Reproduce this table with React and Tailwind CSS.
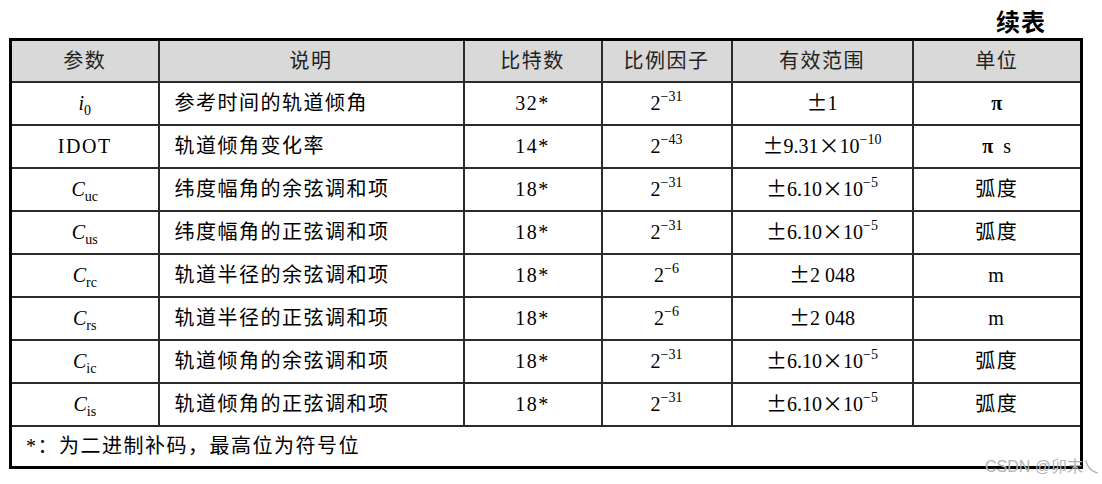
import React from "react";

const F = { fontFamily: '"Liberation Serif", "Noto Sans CJK SC", serif' };
const CJK = { fontFamily: '"Noto Sans CJK SC", sans-serif' };

const Sup = ({ children }) => (
  <sup className="text-[14px] relative -top-[9px]">{children}</sup>
);
const Sub = ({ children }) => (
  <sub className="text-[14px] not-italic relative top-[5px]">{children}</sub>
);
const C = ({ s }) => (
  <span>
    <i>C</i>
    <Sub>{s}</Sub>
  </span>
);
const W = ({ children }) => (
  <span className="inline-block w-[21px] text-center text-[21px] leading-none" style={CJK}>
    {children}
  </span>
);
const T = ({ children }) => <span className="tracking-[1.5px]">{children}</span>;

const rows = [
  [<span><i>i</i><Sub>0</Sub></span>, "参考时间的轨道倾角", "32*", <span>2<Sup>−31</Sup></span>, <span><W>±</W>1</span>, <b>π</b>],
  ["IDOT", "轨道倾角变化率", "14*", <span>2<Sup>−43</Sup></span>, <span><W>±</W>9.31<W>×</W>10<Sup>−10</Sup></span>, <span><b>π</b>&nbsp; s</span>],
  [<C s="uc" />, "纬度幅角的余弦调和项", "18*", <span>2<Sup>−31</Sup></span>, <span><W>±</W>6.10<W>×</W>10<Sup>−5</Sup></span>, "弧度"],
  [<C s="us" />, "纬度幅角的正弦调和项", "18*", <span>2<Sup>−31</Sup></span>, <span><W>±</W>6.10<W>×</W>10<Sup>−5</Sup></span>, "弧度"],
  [<C s="rc" />, "轨道半径的余弦调和项", "18*", <span>2<Sup>−6</Sup></span>, <span><W>±</W>2 048</span>, "m"],
  [<C s="rs" />, "轨道半径的正弦调和项", "18*", <span>2<Sup>−6</Sup></span>, <span><W>±</W>2 048</span>, "m"],
  [<C s="ic" />, "轨道倾角的余弦调和项", "18*", <span>2<Sup>−31</Sup></span>, <span><W>±</W>6.10<W>×</W>10<Sup>−5</Sup></span>, "弧度"],
  [<C s="is" />, "轨道倾角的正弦调和项", "18*", <span>2<Sup>−31</Sup></span>, <span><W>±</W>6.10<W>×</W>10<Sup>−5</Sup></span>, "弧度"],
];

const headers = ["参数", "说明", "比特数", "比例因子", "有效范围", "单位"];

export default function App() {
  return (
    <div className="w-[1102px] h-[484px] bg-white text-black relative" style={F}>
      <div className="h-[38px] flex items-center justify-end pr-[56px] pt-[4px]">
        <span className="text-[24px] font-bold tracking-[1px]" style={CJK}>续表</span>
      </div>
      <div className="pl-[9px]">
        <table className="table-fixed border-collapse border-[3px] border-black w-[1071px] text-[20px]">
          <colgroup>
            <col className="w-[148px]" />
            <col className="w-[305px]" />
            <col className="w-[138px]" />
            <col className="w-[130px]" />
            <col className="w-[181px]" />
            <col className="w-[169px]" />
          </colgroup>
          <thead>
            <tr className="h-[42px] bg-[#d9d9d9]">
              {headers.map((h, i) => (
                <th key={i} className="border-2 border-[#2b2b2b] font-normal text-center text-[#222]">
                  <T>{h}</T>
                </th>
              ))}
            </tr>
          </thead>
          <tbody>
            {rows.map((r, ri) => (
              <tr key={ri} className="h-[43px]">
                {r.map((c, ci) => (
                  <td
                    key={ci}
                    className={
                      "border-2 border-[#2b2b2b] " +
                      (ci === 1 ? "text-left pl-[15px]" : "text-center")
                    }
                  >
                    {typeof c === "string" ? <T>{c}</T> : c}
                  </td>
                ))}
              </tr>
            ))}
            <tr className="h-[42px]">
              <td colSpan={6} className="border-2 border-[#2b2b2b] text-left pl-[14px]">
                <T>*：为二进制补码，最高位为符号位</T>
              </td>
            </tr>
          </tbody>
        </table>
      </div>
      <div
        className="absolute left-[985px] top-[455px] text-[16px] text-[#b4b4b4]"
        style={{ fontFamily: '"Liberation Sans", "Noto Sans CJK SC", sans-serif' }}
      >
        CSDN @卯末乀
      </div>
    </div>
  );
}
